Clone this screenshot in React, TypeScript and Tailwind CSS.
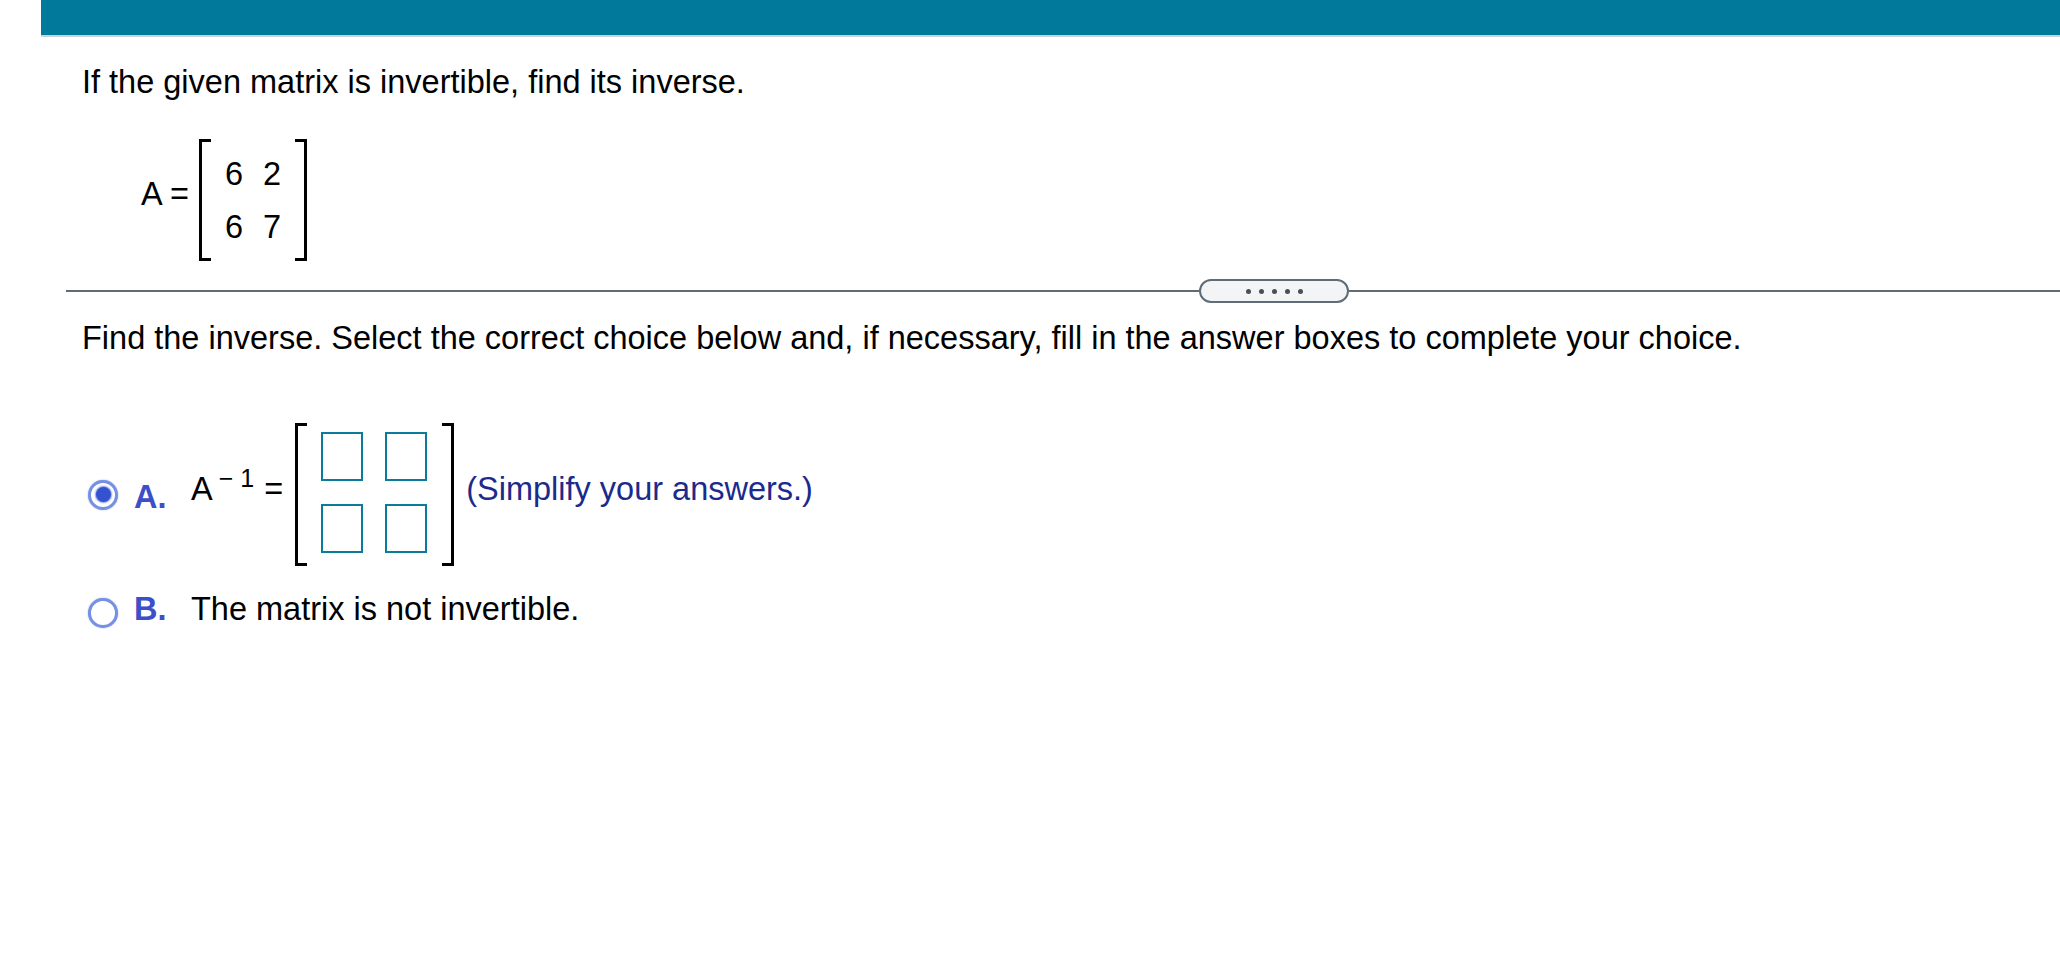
import React from "react";

function Radio({ checked }: { checked?: boolean }) {
  return (
    <div className="w-[30px] h-[30px] shrink-0 rounded-full border-[3px] border-[#7690e3] bg-white flex items-center justify-center shadow-[0_0_1.5px_#8aa0e8]">
      {checked && <div className="w-[15px] h-[15px] rounded-full bg-[#3451cf] shadow-[0_0_1.5px_1px_#7d95e6]" />}
    </div>
  );
}

function Box() {
  return <div className="w-[42px] h-[49px] border-2 border-[#0a7b9b] bg-white" />;
}

export default function App() {
  return (
    <div className="min-h-screen bg-white text-black text-[32.5px] leading-[36px] font-['Liberation_Sans',Arial,sans-serif]">
      {/* header bar */}
      <div className="ml-[41px] h-[37px] bg-[#00799a] border-b-2 border-[#c8d4dc]" />

      {/* question */}
      <div className="pl-[82px] pt-[27px]">If the given matrix is invertible, find its inverse.</div>

      {/* matrix A */}
      <div className="mt-[39px] ml-[141px] flex items-center h-[122px]">
        <span className="mb-[12px]">A =</span>
        <div className="ml-[10px] flex items-center h-full">
          <div className="w-[12px] h-[122px] border-l-[3px] border-y-[3px] border-black" />
          <div className="grid grid-cols-[18px_18px] gap-x-[20px] gap-y-[17px] px-[14px]">
            <span>6</span>
            <span>2</span>
            <span>6</span>
            <span>7</span>
          </div>
          <div className="w-[12px] h-[122px] border-r-[3px] border-y-[3px] border-black" />
        </div>
      </div>

      {/* divider with handle */}
      <div className="mt-[18px] flex items-center h-[24px] pl-[66px]">
        <div className="w-[1133px] h-[2px] bg-[#5f6c78]" />
        <div className="w-[150px] h-[24px] shrink-0 rounded-full border-2 border-[#5f6c78] bg-[#f3f4f6] flex items-center justify-center gap-[8px]">
          <span className="w-[5px] h-[5px] rounded-full bg-[#4a4f57]" />
          <span className="w-[5px] h-[5px] rounded-full bg-[#4a4f57]" />
          <span className="w-[5px] h-[5px] rounded-full bg-[#4a4f57]" />
          <span className="w-[5px] h-[5px] rounded-full bg-[#4a4f57]" />
          <span className="w-[5px] h-[5px] rounded-full bg-[#4a4f57]" />
        </div>
        <div className="flex-1 h-[2px] bg-[#5f6c78]" />
      </div>

      {/* instructions */}
      <div className="mt-[17px] pl-[82px]">
        Find the inverse. Select the correct choice below and, if necessary, fill in the answer boxes to complete your choice.
      </div>

      {/* option A */}
      <div className="mt-[67px] pl-[88px] flex items-center h-[143px]">
        <Radio checked />
        <span className="ml-[16px] w-[57px] mt-[5px] font-bold text-[#3b50c8]">A.</span>
        <div className="flex items-center h-full">
          <span className="mb-[11px]">A</span>
          <span className="ml-[6px] mb-[32px] text-[25px] leading-[25px]">
            −<span className="ml-[7px]">1</span>
          </span>
          <span className="ml-[10px] mb-[11px]">=</span>
          <div className="ml-[12px] flex items-start h-full">
            <div className="w-[12px] h-[143px] border-l-[3px] border-y-[3px] border-black" />
            <div className="grid grid-cols-[42px_42px] gap-x-[22px] gap-y-[23px] pl-[14px] pr-[15px] pt-[9px]">
              <Box />
              <Box />
              <Box />
              <Box />
            </div>
            <div className="w-[12px] h-[143px] border-r-[3px] border-y-[3px] border-black" />
          </div>
          <span className="ml-[12px] mb-[11px] text-[#1c2a8c]">(Simplify your answers.)</span>
        </div>
      </div>

      {/* option B */}
      <div className="mt-[25px] pl-[88px] flex items-center h-[36px]">
        <div className="mt-[8px]">
          <Radio />
        </div>
        <span className="ml-[16px] w-[57px] font-bold text-[#3b50c8]">B.</span>
        <span>The matrix is not invertible.</span>
      </div>
    </div>
  );
}
